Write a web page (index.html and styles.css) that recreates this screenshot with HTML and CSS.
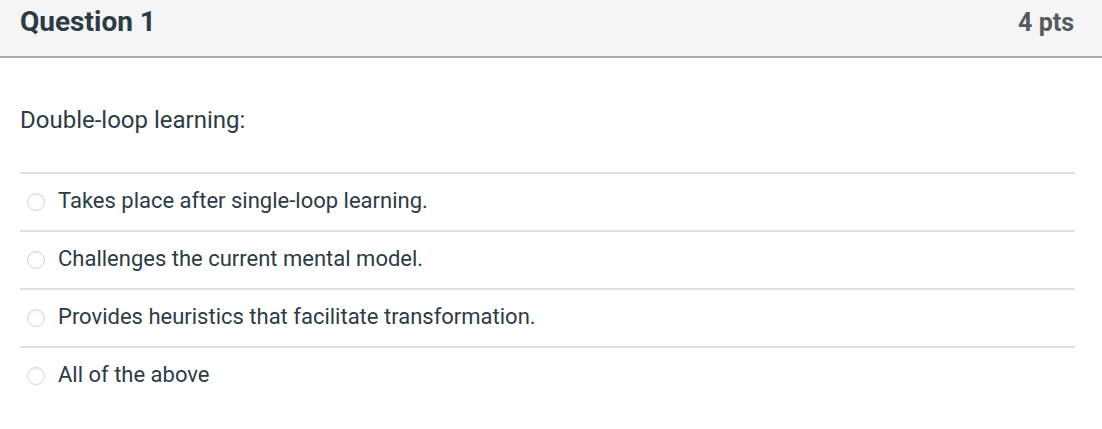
FILE: index.html
```html
<!DOCTYPE html>
<html>
<head>
<meta charset="utf-8">
<link rel="stylesheet" href="styles.css">
</head>
<body>
<div class="question">
  <div class="header">
    <span class="title">Question 1</span>
    <span class="pts">4 pts</span>
  </div>
  <div class="text">Double-loop learning:</div>
  <div class="answers">
    <div class="answer"><span class="radio"></span><span class="label">Takes place after single-loop learning.</span></div>
    <div class="answer"><span class="radio"></span><span class="label">Challenges the current mental model.</span></div>
    <div class="answer"><span class="radio"></span><span class="label">Provides heuristics that facilitate transformation.</span></div>
    <div class="answer"><span class="radio"></span><span class="label">All of the above</span></div>
  </div>
</div>
</body>
</html>
```
FILE: styles.css
```css
html, body { margin: 0; padding: 0; background: #fff; }
body { font-family: Roboto, "Liberation Sans", sans-serif; color: #2d3b45; }
.header {
  height: 48px;
  padding: 8px 28px 0 20px;
  background: #f5f5f5;
  border-bottom: 2px solid #aaaaaa;
  display: flex;
  align-items: baseline;
  justify-content: space-between;
  line-height: 28px;
}
.title { font-size: 28px; font-weight: 700; color: #2d3b45; }
.pts { font-size: 25px; font-weight: 700; color: #555a5e; }
.text {
  font-size: 24px;
  padding: 0 20px;
  margin-top: 49px;
  line-height: 26px;
}
.answers { margin: 39px 27px 0 20px; }
.answer {
  border-top: 2px solid #e0e0e0;
  height: 56px;
  display: flex;
  align-items: center;
}
.radio {
  width: 16px; height: 16px;
  border: 1px solid #d6d6d6;
  border-radius: 50%;
  box-shadow: inset 0 1px 2px rgba(0,0,0,0.08);
  background: #fff;
  margin-left: 7px;
  margin-right: 13px;
  flex: none;
}
.label { font-size: 22px; color: #2d3b45; padding-bottom: 4px; }
```
